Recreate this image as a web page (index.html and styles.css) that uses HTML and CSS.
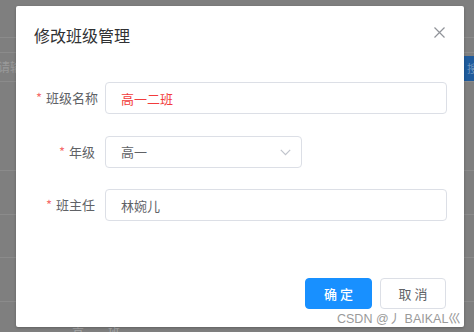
FILE: index.html
```html
<!DOCTYPE html>
<html lang="zh-CN">
<head>
<meta charset="utf-8">
<title>修改班级管理</title>
<link rel="stylesheet" href="styles.css">
</head>
<body>
<div class="screen">
  <div class="backdrop">
    <div class="bg-row bg-top"></div>
    <div class="bg-row bg-sub"></div>
    <div class="bg-row bg-search">
      <span class="bg-placeholder">请输入</span>
      <span class="bg-btn">搜索</span>
    </div>
    <div class="bg-row bg-head"></div>
    <div class="bg-row bg-cell"></div>
    <div class="bg-row bg-cell"></div>
    <div class="bg-row bg-cell"></div>
    <div class="bg-row bg-cell"><span class="bg-text">高一一班</span></div>
  </div>

  <div class="dialog">
    <div class="dialog-header">
      <span class="dialog-title">修改班级管理</span>
      <svg class="dialog-close" width="11" height="11" viewBox="0 0 11 11">
        <path d="M0.5 0.5 L10.5 10.5 M10.5 0.5 L0.5 10.5" stroke="#909399" stroke-width="1.2" fill="none"/>
      </svg>
    </div>
    <div class="dialog-body">
      <div class="form-item">
        <label class="form-label"><span class="req">*</span>班级名称</label>
        <div class="input input-full"><span class="value value-red">高一二班</span></div>
      </div>
      <div class="form-item">
        <label class="form-label"><span class="req">*</span>年级</label>
        <div class="input input-select">
          <span class="value">高一</span>
          <svg class="arrow" width="11" height="7" viewBox="0 0 11 7">
            <path d="M0.8 0.8 L5.5 5.6 L10.2 0.8" stroke="#c0c4cc" stroke-width="1.2" fill="none"/>
          </svg>
        </div>
      </div>
      <div class="form-item">
        <label class="form-label"><span class="req">*</span>班主任</label>
        <div class="input input-full"><span class="value">林婉儿</span></div>
      </div>
    </div>
    <div class="dialog-footer">
      <button class="btn btn-primary">确定</button>
      <button class="btn btn-default">取消</button>
    </div>
  </div>

  <div class="watermark">CSDN @丿 BAIKAL巛</div>
</div>
</body>
</html>
```

FILE: styles.css
```css
* { box-sizing: border-box; }
html, body { margin: 0; padding: 0; }
body {
  font-family: "Noto Sans CJK SC", "Noto Sans", sans-serif;
  background: #7f7f7f;
}
.screen {
  position: relative;
  width: 474px;
  height: 332px;
  overflow: hidden;
  background: #7f7f7f;
}
.backdrop {
  display: flex;
  flex-direction: column;
  height: 100%;
}
.bg-row {
  border-bottom: 1px solid #8b8b8b;
  flex: none;
}
.bg-top { height: 38px; }
.bg-sub { height: 15px; }
.bg-search {
  height: 29px;
  display: flex;
  align-items: flex-end;
  justify-content: space-between;
}
.bg-placeholder {
  font-size: 12px;
  color: #9a9a9a;
  line-height: 15px;
  margin-bottom: 7px;
  margin-left: -2px;
}
.bg-btn {
  width: 60px;
  height: 25px;
  background: #1f5b9c;
  color: #7596bb;
  font-size: 11px;
  line-height: 25px;
  padding-left: 3px;
  margin-right: -50px;
}
.bg-head { height: 89px; }
.bg-cell { height: 43.5px; }
.bg-cell:last-child { padding: 17px 0 0 72px; border-bottom: none; }
.bg-text { font-size: 12px; color: #a8a8a8; }

.dialog {
  position: absolute;
  left: 16px;
  top: 6px;
  width: 448px;
  height: 321px;
  background: #ffffff;
  border-radius: 2px;
  box-shadow: 0 1px 3px rgba(0,0,0,0.25);
  display: flex;
  flex-direction: column;
}
.dialog-header {
  position: relative;
  padding: 17px 18px 0 18px;
  height: 41px;
}
.dialog-title {
  font-size: 16px;
  line-height: 24px;
  color: #303133;
}
.dialog-close {
  position: absolute;
  right: 19px;
  top: 21px;
}
.dialog-body {
  padding: 35px 17px 0 20px;
}
.form-item {
  display: flex;
  align-items: center;
  margin-bottom: 21.5px;
}
.form-label {
  width: 69px;
  flex: none;
  padding-right: 10px;
  text-align: right;
  font-size: 13px;
  color: #606266;
  line-height: 32px;
  white-space: nowrap;
}
.req {
  color: #f56c6c;
  margin-right: 4px;
}
.input {
  height: 32px;
  border: 1px solid #dcdfe6;
  border-radius: 4px;
  padding: 0 15px;
  display: flex;
  align-items: center;
  font-size: 13px;
  color: #606266;
}
.input-full { flex: 1; }
.input-select {
  width: 197px;
  justify-content: space-between;
  padding-right: 10px;
}
.value-red { color: #f23c3c; }
.arrow { margin-top: 1px; }

.dialog-footer {
  margin-top: auto;
  padding: 0 18px 18px 0;
  display: flex;
  justify-content: flex-end;
  gap: 8px;
}
.btn {
  height: 31px;
  border-radius: 4px;
  font-family: "Noto Sans CJK SC", sans-serif;
  font-size: 13px;
  letter-spacing: 3px;
  padding: 0 0 0 3px;
  cursor: pointer;
}
.btn-primary {
  width: 67px;
  background: #1890ff;
  border: 1px solid #1890ff;
  color: #ffffff;
  font-weight: 500;
}
.btn-default {
  width: 66px;
  background: #ffffff;
  border: 1px solid #dcdfe6;
  color: #606266;
}
.watermark {
  position: absolute;
  left: 337px;
  top: 308px;
  font-family: "Liberation Sans", "Noto Sans CJK SC", sans-serif;
  font-size: 12.5px;
  color: #9a9a9a;
  text-shadow: 0 0 1px #ffffff;
  white-space: nowrap;
}
```
